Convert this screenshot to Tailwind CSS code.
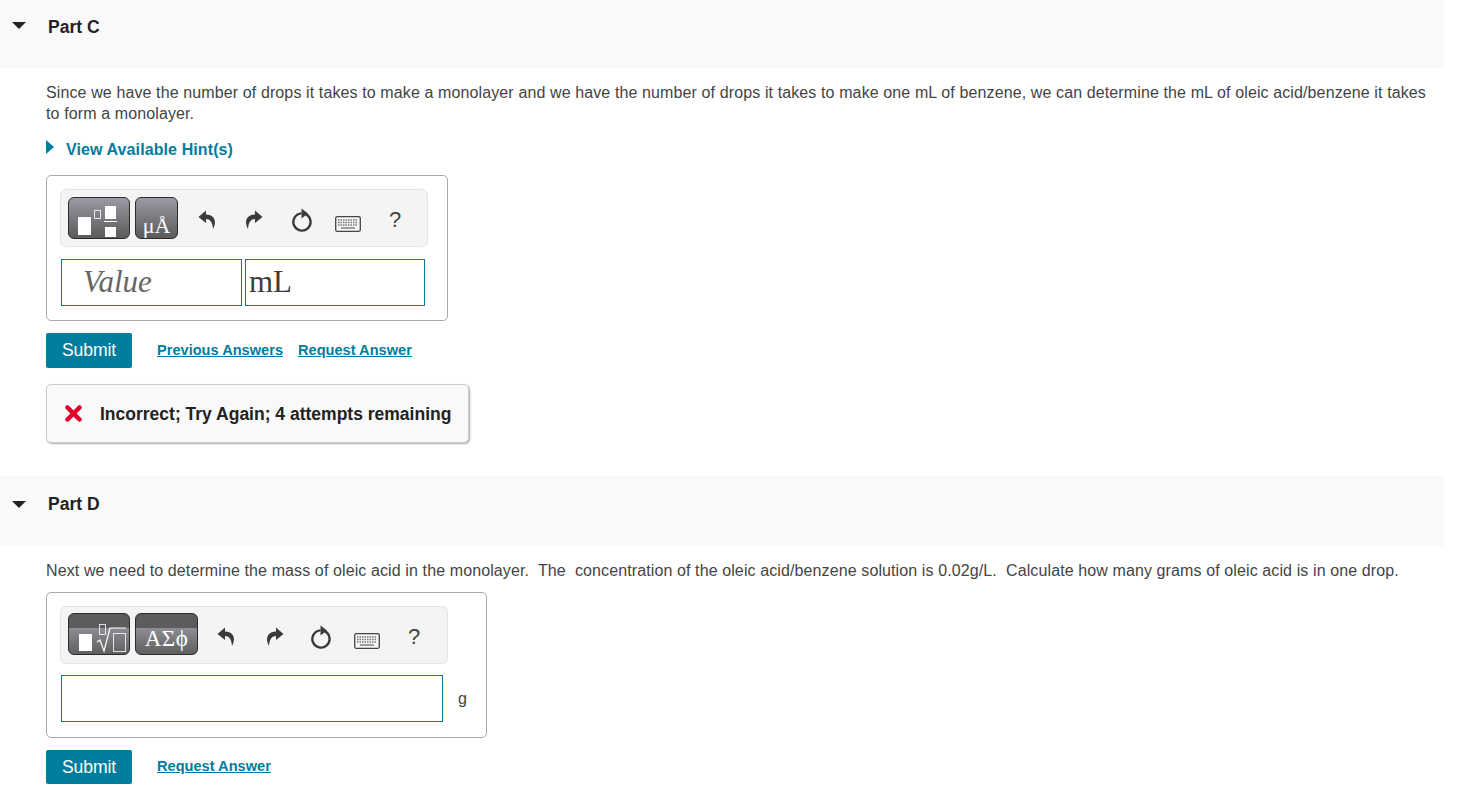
<!DOCTYPE html>
<html lang="en">
<head>
    <meta charset="UTF-8">
    <meta name="viewport" content="width=device-width, initial-scale=1.0">
    <title>Part C and Part D</title>
    <script src="https://cdn.jsdelivr.net/npm/@tailwindcss/browser@4"></script>
</head>
<body class="bg-white font-['Liberation_Sans',Arial,sans-serif] text-[16px] text-[#444] overflow-hidden">
    <svg class="hidden">
        <symbol id="undo" viewBox="0 0 18 20"><path d="M8 0.5 L0.5 7 L8 13 V9 C12 9 14.5 12 15 19 C18.5 13 18 5 8 4.5 Z" fill="currentColor"/></symbol>
        <symbol id="redo" viewBox="0 0 18 20"><path d="M10 0.5 L17.5 7 L10 13 V9 C6 9 3.5 12 3 19 C-0.5 13 0 5 10 4.5 Z" fill="currentColor"/></symbol>
        <symbol id="reset" viewBox="0 0 22 24"><path d="M15 6.4 A8.6 8.6 0 1 1 10.5 5.4" fill="none" stroke="currentColor" stroke-width="2.4"/><path d="M10.5 0.5 L17 5.5 L10.5 10.5 Z" fill="currentColor"/></symbol>
        <symbol id="keyboard" viewBox="0 0 26 16">
            <rect x="0.7" y="0.7" width="24.6" height="14.6" rx="1.5" fill="#f4f4f4" stroke="currentColor" stroke-width="1.3"/>
            <path d="M3 4 H23 M3 6.5 H23 M3 9 H23" stroke="#777" stroke-width="1.3" stroke-dasharray="1.5 1"/>
            <path d="M6 12 H20" stroke="#777" stroke-width="1.4"/>
        </symbol>
    </svg>

    <div class="w-[1444px]">
        <!-- Part C -->
        <div class="h-[68px] bg-[#f9f9f9] flex items-start pt-[17px]">
            <div class="w-0 h-0 ml-[12px] mt-[5px] border-x-[7px] border-x-transparent border-t-[7px] border-t-[#222]"></div>
            <h2 class="ml-[22px] font-bold text-[17.5px] text-[#222] leading-5">Part C</h2>
        </div>

        <div class="pl-[46px]">
            <p class="mt-[14px] w-[1384px] leading-[21px] tracking-[0.115px]">Since we have the number of drops it takes to make a monolayer and we have the number of drops it takes to make one mL of benzene, we can determine the mL of oleic acid/benzene it takes to form a monolayer.</p>

            <div class="mt-[16px] h-[20px] flex items-start">
                <div class="w-0 h-0 border-y-[7px] border-y-transparent border-l-[8px] border-l-[#007c9e]"></div>
                <a class="ml-[12px] font-bold text-[#007c9e] leading-5 tracking-[0.1px]">View Available Hint(s)</a>
            </div>

            <!-- answer box -->
            <div class="mt-[15px] w-[402px] h-[146px] border border-[#aaaaaa] rounded-[5px] pl-[13px] pt-[13px]">
                <div class="w-[368px] h-[58px] bg-[#f4f4f4] border border-[#e4e4e4] rounded-[6px] flex items-center pl-[7px] pb-[1px]">
                    <div class="w-[62px] h-[42px] rounded-[6px] border border-[#2c2c2c] bg-gradient-to-b from-[#9c9aa4] to-[#5b5b5b] relative shrink-0">
                        <div class="absolute left-[9px] top-[19px] w-[13px] h-[18px] bg-white"></div>
                        <div class="absolute left-[25px] top-[12px] w-[7px] h-[9px] border border-white/80"></div>
                        <div class="absolute left-[36px] top-[8px] w-[11px] h-[13px] bg-white"></div>
                        <div class="absolute left-[35px] top-[23px] w-[13px] h-[1px] bg-white"></div>
                        <div class="absolute left-[36px] top-[29px] w-[11px] h-[10px] bg-white"></div>
                    </div>
                    <div class="ml-[5px] w-[43px] h-[42px] rounded-[6px] border border-[#2c2c2c] bg-gradient-to-b from-[#9c9aa4] to-[#5b5b5b] text-white font-['Liberation_Serif',serif] text-[22px] leading-none flex items-end justify-center pb-[1px] shrink-0">μÅ</div>
                    <svg class="ml-[20px] mt-[5px] w-[18px] h-[20px] text-[#3a3a3a] shrink-0"><use href="#undo"/></svg>
                    <svg class="ml-[29px] mt-[5px] w-[18px] h-[20px] text-[#3a3a3a] shrink-0"><use href="#redo"/></svg>
                    <svg class="ml-[28px] mt-[5px] w-[22px] h-[24px] text-[#3a3a3a] shrink-0"><use href="#reset"/></svg>
                    <svg class="ml-[22px] mt-[13px] w-[26px] h-[16px] text-[#444] shrink-0"><use href="#keyboard"/></svg>
                    <span class="ml-[28px] mt-[5px] text-[22px] leading-none text-[#444]">?</span>
                </div>
                <div class="mt-[12px] ml-[1px] flex">
                    <div class="w-[181px] h-[47px] border border-[#007c9e] font-['Liberation_Serif',serif] italic text-[31px] text-[#666] pl-[21px] leading-[44px]">Value</div>
                    <div class="ml-[3px] w-[180px] h-[47px] border border-[#007c9e] font-['Liberation_Serif',serif] text-[31px] text-[#3d3d3d] pl-[3px] leading-[44px]">mL</div>
                </div>
            </div>

            <div class="mt-[12px] flex items-center">
                <button class="w-[86px] h-[35px] bg-[#007c9e] rounded-[2px] text-white text-[17.6px] tracking-[-0.1px]">Submit</button>
                <a class="ml-[25px] text-[14.6px] font-bold text-[#007c9e] underline">Previous Answers</a>
                <a class="ml-[15px] text-[14.6px] font-bold text-[#007c9e] underline">Request Answer</a>
            </div>

            <div class="mt-[16px] w-[423px] h-[59px] bg-[#f9f9f9] border border-[#cccccc] rounded-[5px] shadow-[1px_1px_2px_#aaaaaa] flex items-center pl-[18px]">
                <svg class="w-[17px] h-[17px]" viewBox="0 0 17 17"><path d="M2.5 2.5 L14.5 14.5 M14.5 2.5 L2.5 14.5" stroke="#e0002b" stroke-width="4.5" stroke-linecap="round"/></svg>
                <span class="ml-[18px] font-bold text-[17.5px] text-[#222] leading-5">Incorrect; Try Again; 4 attempts remaining</span>
            </div>
        </div>

        <!-- Part D -->
        <div class="mt-[33px] h-[70px] bg-[#f9f9f9] flex items-start pt-[18px]">
            <div class="w-0 h-0 ml-[12px] mt-[7px] border-x-[7px] border-x-transparent border-t-[7px] border-t-[#222]"></div>
            <h2 class="ml-[22px] font-bold text-[17.5px] text-[#222] leading-5">Part D</h2>
        </div>

        <div class="pl-[46px]">
            <p class="mt-[14px] leading-[21px] tracking-[0.11px] whitespace-pre">Next we need to determine the mass of oleic acid in the monolayer.  The  concentration of the oleic acid/benzene solution is 0.02g/L.  Calculate how many grams of oleic acid is in one drop.</p>

            <div class="mt-[11px] w-[441px] h-[146px] border border-[#aaaaaa] rounded-[5px] pl-[13px] pt-[13px]">
                <div class="w-[388px] h-[58px] bg-[#f4f4f4] border border-[#e4e4e4] rounded-[6px] flex items-center pl-[7px] pb-[2px]">
                    <div class="w-[62px] h-[42px] rounded-[6px] border border-[#2c2c2c] bg-gradient-to-b from-[#5c5c5c] from-[34%] via-[#8e8d95] via-[36%] to-[#5f5f5f] relative shrink-0">
                        <div class="absolute left-[10px] top-[20px] w-[13px] h-[17px] bg-white"></div>
                        <div class="absolute left-[30px] top-[10px] w-[7px] h-[11px] border border-white/80"></div>
                        <svg class="absolute left-0 top-0 w-[60px] h-[40px]" viewBox="0 0 60 40"><path d="M28 28 L31 26 L35 37 L41 14 H57" fill="none" stroke="white" stroke-width="1.2"/></svg>
                        <div class="absolute left-[44px] top-[19px] w-[13px] h-[19px] border border-white/80"></div>
                    </div>
                    <div class="ml-[5px] w-[63px] h-[42px] rounded-[6px] border border-[#2c2c2c] bg-gradient-to-b from-[#5c5c5c] from-[34%] via-[#8e8d95] via-[36%] to-[#5f5f5f] text-white font-['Liberation_Serif',serif] text-[23px] tracking-[0.5px] leading-none flex items-end justify-center pb-[4px] shrink-0">ΑΣϕ</div>
                    <svg class="ml-[19px] mt-[5px] w-[18px] h-[20px] text-[#3a3a3a] shrink-0"><use href="#undo"/></svg>
                    <svg class="ml-[31px] mt-[5px] w-[18px] h-[20px] text-[#3a3a3a] shrink-0"><use href="#redo"/></svg>
                    <svg class="ml-[26px] mt-[5px] w-[22px] h-[24px] text-[#3a3a3a] shrink-0"><use href="#reset"/></svg>
                    <svg class="ml-[22px] mt-[13px] w-[26px] h-[16px] text-[#444] shrink-0"><use href="#keyboard"/></svg>
                    <span class="ml-[28px] mt-[5px] text-[22px] leading-none text-[#444]">?</span>
                </div>
                <div class="mt-[11px] ml-[1px] flex items-center">
                    <div class="w-[382px] h-[47px] border border-[#007c9e]"></div>
                    <span class="ml-[15px] text-[#444]">g</span>
                </div>
            </div>

            <div class="mt-[12px] flex items-center">
                <button class="w-[86px] h-[34px] bg-[#007c9e] rounded-[2px] text-white text-[17.6px] tracking-[-0.1px]">Submit</button>
                <a class="ml-[25px] text-[14.6px] font-bold text-[#007c9e] underline">Request Answer</a>
            </div>
        </div>
    </div>
</body>
</html>
